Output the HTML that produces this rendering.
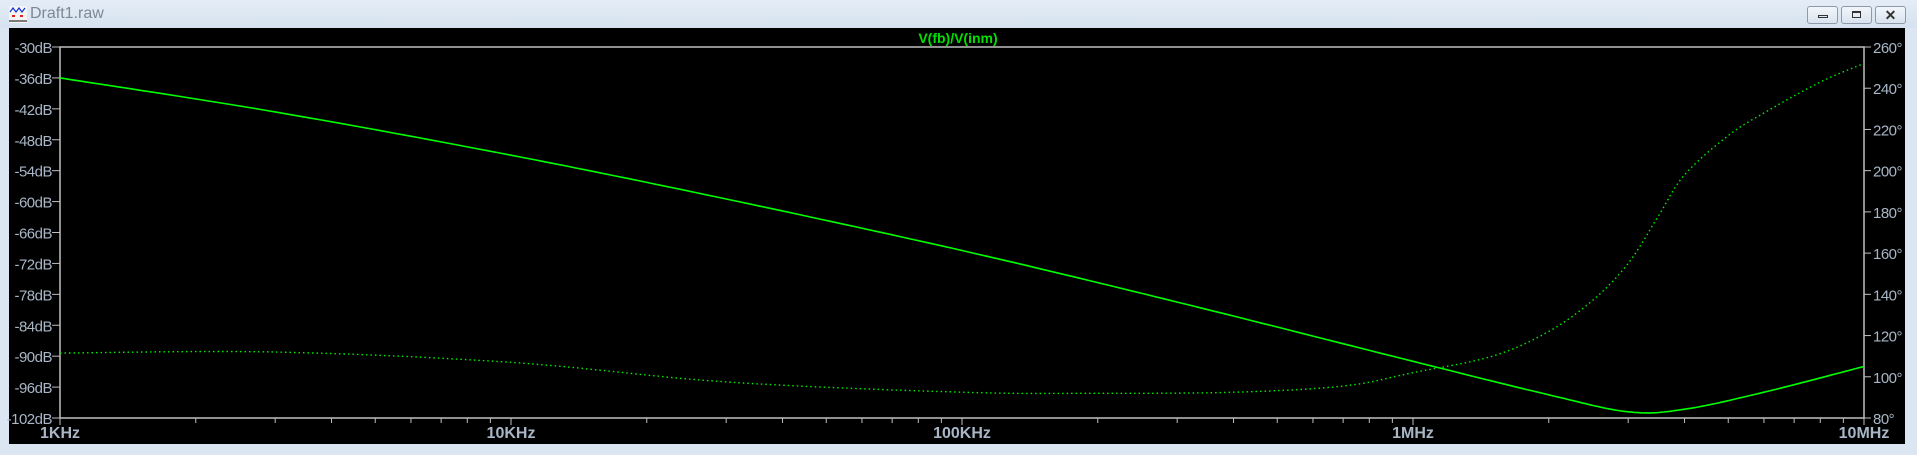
<!DOCTYPE html>
<html><head><meta charset="utf-8"><style>
html,body{margin:0;padding:0;width:1917px;height:455px;overflow:hidden;background:#dbe6f2;font-family:"Liberation Sans",Arial,sans-serif}
#tb{position:absolute;left:0;top:0;width:1917px;height:28px;background:linear-gradient(#e4edf7,#d6e2ef)}
#title{position:absolute;left:30px;top:5px;font-size:16px;color:#7d8896}
.btn{position:absolute;top:6px;width:31px;height:18px;border:1px solid #8d9aab;border-radius:3px;background:linear-gradient(#f2f6fb,#d9e3ee);box-sizing:border-box}
#plot{position:absolute;left:9px;top:28px;width:1896px;height:416px;background:#000}
</style></head><body>
<div id="tb">
<svg style="position:absolute;left:9px;top:6px" width="18" height="17"><rect x="0" y="0" width="18" height="17" fill="#f4f4f4"/><polyline points="1,6 4,2 7,6 10,2 13,6 16,2" fill="none" stroke="#1030d0" stroke-width="1.2"/><rect x="3" y="9" width="3" height="2" fill="#e02020"/><rect x="11" y="9" width="3" height="2" fill="#e02020"/><line x1="0" y1="15" x2="18" y2="15" stroke="#000"/></svg>
<div id="title">Draft1.raw</div>
<div class="btn" style="left:1807px"><div style="position:absolute;left:10px;top:8px;width:10px;height:3px;border:1px solid #333;box-sizing:border-box"></div></div>
<div class="btn" style="left:1841px"><div style="position:absolute;left:10px;top:4px;width:9px;height:7px;border:1px solid #333;border-top-width:2px;box-sizing:border-box"></div></div>
<div class="btn" style="left:1875px;font-size:14px;font-weight:bold;color:#333;text-align:center;line-height:16px">✕</div>
</div>
<div id="plot"></div>
<svg id="s" style="position:absolute;left:0;top:0" width="1917" height="455"></svg>
<script>
var s=document.getElementById('s'),h='';
function X(f){return 60+451*Math.log10(f/1000)}
function YD(d){return 47+(-30-d)*(371/72)}
function YP(p){return 47+(260-p)*(371/180)}
var ax='#c0c0c0',tc='#a8b6c6';
h+='<text x="958" y="43" fill="#00e000" font-size="14" font-weight="bold" text-anchor="middle">V(fb)/V(inm)</text>';
h+='<polyline points="60,418 60,47 1864,47 1864,418 60,418" fill="none" stroke="'+ax+'" stroke-width="1.5"/>';
for(var i=0;i<=12;i++){var y=47+i*371/12;h+='<line x1="52" y1="'+y+'" x2="60" y2="'+y+'" stroke="'+ax+'"/>';
h+='<text x="52" y="'+(y+6)+'" fill="'+tc+'" font-size="15" letter-spacing="-0.5" text-anchor="end">'+(-30-6*i)+'dB</text>';}
for(var i=0;i<=9;i++){var y=47+i*371/9;h+='<line x1="1864" y1="'+y+'" x2="1871" y2="'+y+'" stroke="'+ax+'"/>';
h+='<text x="1873" y="'+(y+6)+'" fill="'+tc+'" font-size="15" letter-spacing="-0.5">'+(260-20*i)+'°</text>';}
var lab=['1KHz','10KHz','100KHz','1MHz','10MHz'];
for(var d=0;d<4;d++)for(var k=1;k<10;k++){var x=60+451*(d+Math.log10(k));h+='<line x1="'+x+'" y1="418" x2="'+x+'" y2="'+(k==1?425:423)+'" stroke="'+ax+'"/>';}
h+='<line x1="1864" y1="418" x2="1864" y2="425" stroke="'+ax+'"/>';
for(var d=0;d<5;d++)h+='<text x="'+(60+451*d)+'" y="438" fill="'+tc+'" font-size="16" font-weight="bold" text-anchor="middle">'+lab[d]+'</text>';
var mag=[[1e3,-36],[3e3,-42.6],[1e4,-51],[3e4,-59.5],[1e5,-69.5],[3e5,-79.5],[1e6,-91],[2e6,-97.5],[3e6,-100.8],[4e6,-100.3],[6e6,-97],[1e7,-92]];
var ph=[[1e3,111.5],[3e3,112],[1e4,107],[3e4,97.5],[1e5,92.5],[2e5,92],[4e5,92.5],[7e5,95.5],[1e6,102],[1.5e6,110],[2e6,122],[2.5e6,137],[3e6,155],[3.5e6,178],[4e6,198],[5e6,217],[6e6,228],[8e6,243],[1e7,252]];
function curve(pts,Y){var P=pts.map(function(p){return [X(p[0]),Y(p[1])]});var out=[];
for(var i=0;i<P.length-1;i++){var p0=P[Math.max(i-1,0)],p1=P[i],p2=P[i+1],p3=P[Math.min(i+2,P.length-1)];
for(var t=0;t<1;t+=0.05){var t2=t*t,t3=t2*t;var f=function(a,b,c,d){return 0.5*(2*b+(-a+c)*t+(2*a-5*b+4*c-d)*t2+(-a+3*b-3*c+d)*t3)};
out.push(f(p0[0],p1[0],p2[0],p3[0]).toFixed(1)+','+f(p0[1],p1[1],p2[1],p3[1]).toFixed(1));}}
out.push(P[P.length-1][0]+','+P[P.length-1][1]);return out.join(' ');}
h+='<polyline points="'+curve(mag,YD)+'" fill="none" stroke="#00ff00" stroke-width="1.6"/>';
h+='<polyline points="'+curve(ph,YP)+'" fill="none" stroke="#00ee00" stroke-width="1.4" stroke-dasharray="1.5 3"/>';
s.innerHTML=h;
</script>
</body></html>
